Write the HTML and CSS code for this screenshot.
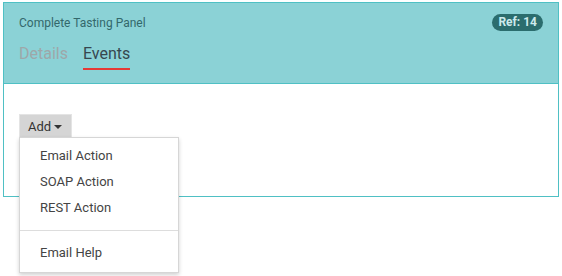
FILE: index.html
```html
<!DOCTYPE html>
<html>
<head>
<meta charset="utf-8">
<link rel="stylesheet" href="styles.css">
</head>
<body>
<div class="panel">
  <div class="panel-header">
    <div class="title-row">
      <span class="title">Complete Tasting Panel</span>
      <span class="badge">Ref: 14</span>
    </div>
    <div class="tabs">
      <span class="tab">Details</span>
      <span class="tab active">Events</span>
    </div>
  </div>
  <div class="panel-body">
    <div class="dropdown">
      <button class="add-btn">Add <span class="caret"></span></button>
      <ul class="menu">
        <li class="item">Email Action</li>
        <li class="item">SOAP Action</li>
        <li class="item">REST Action</li>
        <li class="divider"></li>
        <li class="item">Email Help</li>
      </ul>
    </div>
  </div>
</div>
</body>
</html>
```

FILE: styles.css
```css
* { box-sizing: border-box; }
html, body { margin: 0; padding: 0; background: #fff; }
html { height: 100%; }
body {
  min-height: 100%;
  padding: 2px 3px;
  font-family: Roboto, "Liberation Sans", sans-serif;
}
.panel {
  width: 556px;
  height: 195px;
  border: 1px solid #4fc0c4;
  display: flex;
  flex-direction: column;
}
.panel-header {
  background: #8bd2d6;
  height: 81px;
  border-bottom: 1px solid #4fc0c4;
  padding: 9px 15px 0 15px;
}
.title-row {
  display: flex;
  justify-content: space-between;
  align-items: center;
  height: 21px;
}
.title {
  font-size: 12px;
  color: #33686b;
}
.badge {
  background: #2b6d6e;
  color: #cdeaec;
  font-size: 12px;
  font-weight: bold;
  border-radius: 9px;
  padding: 1px 6px;
  line-height: 15px;
}
.tabs {
  display: flex;
  gap: 15px;
  margin-top: 10px;
}
.tab {
  font-size: 16px;
  color: #9ea7a9;
  line-height: 22px;
  padding-bottom: 3px;
}
.tab.active {
  color: #36474f;
  border-bottom: 2px solid #e53935;
}
.panel-body {
  flex: 1;
  position: relative;
  padding: 30px 15px 0 15px;
}
.dropdown {
  position: relative;
  display: inline-block;
}
.add-btn {
  font-family: Roboto, "Liberation Sans", sans-serif;
  font-size: 13px;
  color: #333;
  background: #d5d5d5;
  border: 1px solid #e4e4e4;
  border-bottom: none;
  height: 23px;
  width: 53px;
  padding: 0 0 0 8px;
  text-align: left;
  display: flex;
  align-items: center;
  gap: 3px;
}
.caret {
  width: 0;
  height: 0;
  border-left: 4px solid transparent;
  border-right: 4px solid transparent;
  border-top: 4px solid #333;
  margin-top: 1px;
}
.menu {
  position: absolute;
  left: 0;
  top: 23px;
  width: 160px;
  margin: 0;
  padding: 5px 0 6px 0;
  list-style: none;
  background: #fff;
  border: 1px solid #d6d6d6;
  box-shadow: 0 2px 4px rgba(0,0,0,0.18);
  z-index: 2;
}
.item {
  font-size: 13px;
  color: #444;
  height: 26px;
  line-height: 26px;
  padding-left: 20px;
}
.divider {
  height: 1px;
  background: #ddd;
  margin: 9px 0 9px 0;
}
```
